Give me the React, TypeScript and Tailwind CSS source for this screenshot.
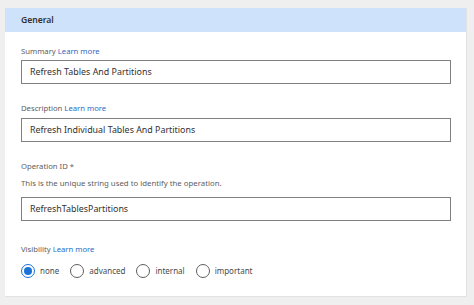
import React from "react";

const font = { fontFamily: '"Noto Sans", "Open Sans", sans-serif' };

function FieldLabel({ label, link }: { label: string; link?: boolean }) {
  return (
    <div className="h-[12px] text-[7.7px] leading-[12px] text-[#605e5c]">
      {label}
      {link && <span className="text-[#2b6cc4]"> Learn more</span>}
    </div>
  );
}

function TextBox({ value }: { value: string }) {
  return (
    <div className="flex h-[24px] items-center border border-[#7f7f7f] px-[8px] text-[8.9px] text-[#323130]">
      {value}
    </div>
  );
}

function Radio({ label, checked }: { label: string; checked?: boolean }) {
  return (
    <label className="flex items-center gap-[5px]">
      <span
        className={`flex h-[14px] w-[14px] items-center justify-center rounded-full border ${
          checked ? "border-[#1a73d8]" : "border-[#605e5c]"
        }`}
      >
        {checked && <span className="h-[8px] w-[8px] rounded-full bg-[#1a73d8]" />}
      </span>
      <span className="text-[8px] text-[#4a4a4a]">{label}</span>
    </label>
  );
}

export default function App() {
  return (
    <div className="h-[305px] w-[474px] bg-[#efefef] pt-[8px] pl-[5px]" style={font}>
      <div className="h-[289px] w-[462px] border-r border-b border-[#e2e2e2] bg-white">
        <div className="flex h-[24px] items-center bg-[#cfe2fc] pl-[16px] text-[8.6px] font-semibold text-[#323130]">
          General
        </div>
        <div className="flex flex-col pl-[16px] pr-[15px]">
          <div className="mt-[13px]">
            <FieldLabel label="Summary" link />
          </div>
          <div className="mt-[3px]">
            <TextBox value="Refresh Tables And Partitions" />
          </div>
          <div className="mt-[18px]">
            <FieldLabel label="Description" link />
          </div>
          <div className="mt-[4px]">
            <TextBox value="Refresh Individual Tables And Partitions" />
          </div>
          <div className="mt-[18px]">
            <FieldLabel label="Operation ID *" />
          </div>
          <div className="mt-[5px] h-[12px] text-[7.8px] leading-[12px] text-[#605e5c]">
            This is the unique string used to identify the operation.
          </div>
          <div className="mt-[8px]">
            <TextBox value="RefreshTablesPartitions" />
          </div>
          <div className="mt-[22px]">
            <FieldLabel label="Visibility" link />
          </div>
          <div className="mt-[9px] flex items-center gap-[11px]">
            <Radio label="none" checked />
            <Radio label="advanced" />
            <Radio label="internal" />
            <Radio label="important" />
          </div>
        </div>
      </div>
    </div>
  );
}
